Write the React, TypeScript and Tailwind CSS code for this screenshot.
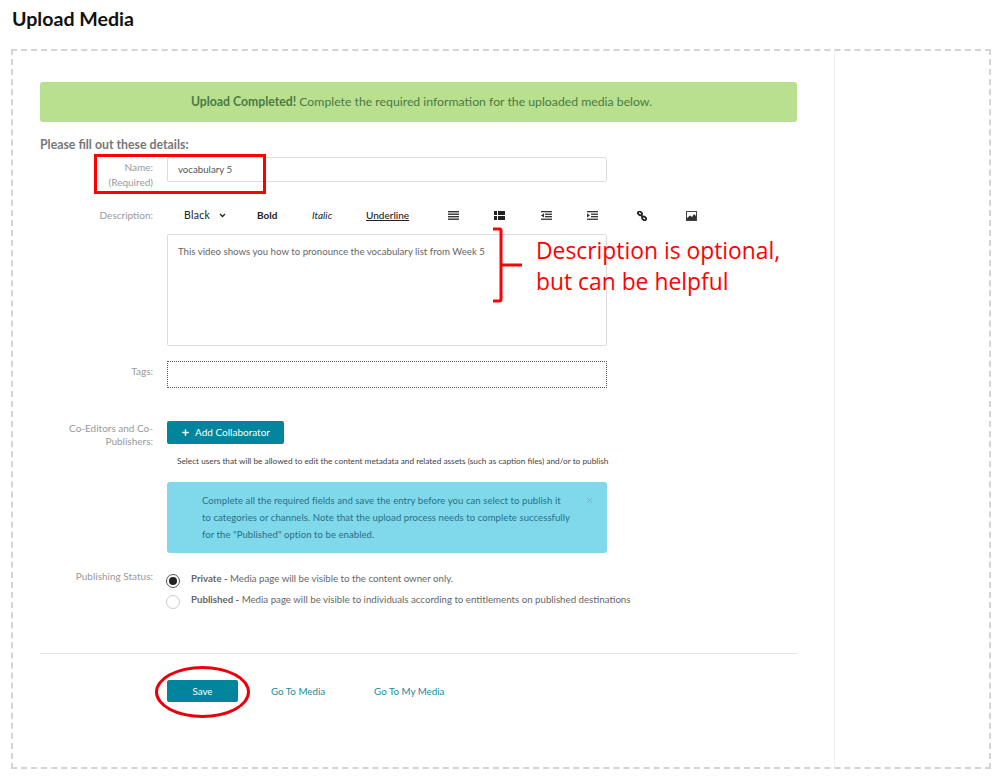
import { Plus, X } from 'lucide-react';

const TOOLBAR_TEXT = 'text-[10px] text-[#222]';

function ListIcon() {
  return (
    <svg width="11" height="9" viewBox="0 0 11 9" fill="#333">
      <rect y="0" width="11" height="1.4" />
      <rect y="2.5" width="11" height="1.4" />
      <rect y="5" width="11" height="1.4" />
      <rect y="7.5" width="11" height="1.4" />
    </svg>
  );
}

function BlockListIcon() {
  return (
    <svg width="11" height="9" viewBox="0 0 11 9" fill="#222">
      <rect x="0" y="0" width="3" height="4" />
      <rect x="4" y="0" width="7" height="4" />
      <rect x="0" y="5" width="3" height="4" />
      <rect x="4" y="5" width="7" height="4" />
    </svg>
  );
}

function IndentIcon({ flip }: { flip?: boolean }) {
  return (
    <svg width="11" height="9" viewBox="0 0 11 9" fill="#333">
      <rect y="0" width="11" height="1.3" />
      <rect x="4" y="2.6" width="7" height="1.3" />
      <rect x="4" y="5" width="7" height="1.3" />
      <rect y="7.6" width="11" height="1.3" />
      {flip ? <polygon points="0,2.2 3,4.4 0,6.6" /> : <polygon points="3,2.2 0,4.4 3,6.6" />}
    </svg>
  );
}

function LinkIcon() {
  return (
    <svg width="10" height="10" viewBox="0 0 11 11" fill="none" stroke="#222" strokeWidth="2">
      <rect x="0.9" y="0.9" width="4.6" height="3.4" rx="1.6" transform="rotate(40 3.2 2.7)" />
      <rect x="5.5" y="6.4" width="4.6" height="3.4" rx="1.6" transform="rotate(40 7.8 8.2)" />
      <path d="M4 4 L7 7" />
    </svg>
  );
}

function ImageIcon() {
  return (
    <svg width="11" height="10" viewBox="0 0 11 10">
      <rect width="11" height="10" fill="#444" />
      <rect x="1" y="1" width="9" height="8" fill="#fff" />
      <path d="M1 9 L1 7 L4 4.5 L6 6 L8 3 L10 5 L10 9 Z" fill="#333" />
    </svg>
  );
}

function Label({ children, className = '' }: { children: React.ReactNode; className?: string }) {
  return <div className={`w-[113px] shrink-0 text-right text-[10px] text-[#999] ${className}`}>{children}</div>;
}

export default function App() {
  return (
    <div className="relative h-[783px] w-[1000px] overflow-hidden bg-white font-['Lato','Liberation_Sans',sans-serif] text-[#666]">
      <h1 className="pl-3 pt-[7px] text-[19.6px] leading-[23px] font-bold text-[#111]">Upload Media</h1>

      <div className="mt-[19px] ml-[11px] flex h-[720px] w-[980px] border-2 border-dashed border-[#d4d4d4]">
        <div className="w-[822px] border-r border-[#f0f0f0] pt-[31px] pl-[27px]">
          <div className="flex h-10 w-[757px] items-center justify-center rounded-[3px] bg-[#b9e08f] pl-[6px] text-[12.25px] text-[#4a7a45]">
            <span><b>Upload Completed!</b> Complete the required information for the uploaded media below.</span>
          </div>

          <p className="mt-[15px] text-[12.3px] leading-4 font-bold text-[#777]">Please fill out these details:</p>

          <div className="mt-[4px] flex gap-[14px]">
            <Label className="pt-[3px] leading-[15px]">Name:<br />(Required)</Label>
            <div className="flex h-[25px] w-[440px] items-center rounded-[2px] border border-[#ddd] px-[10px] text-[9.7px] text-[#555]">vocabulary 5</div>
          </div>

          <div className="mt-[18px] flex gap-[14px]">
            <Label className="leading-[15px]">Description:</Label>
            <div className={`flex h-[15px] items-center pl-[17px] ${TOOLBAR_TEXT}`}>
              <span className="flex w-[73px] items-center gap-[9px] text-[10.5px] tracking-[0.3px]">
                Black
                <svg width="7" height="5" viewBox="0 0 7 5" fill="none" stroke="#222" strokeWidth="1.3"><path d="M1 1 L3.5 3.5 L6 1" /></svg>
              </span>
              <span className="w-[55px] font-bold">Bold</span>
              <span className="w-[54px] italic">Italic</span>
              <span className="w-[82px] font-medium underline">Underline</span>
              <span className="w-[46px]"><ListIcon /></span>
              <span className="w-[47px]"><BlockListIcon /></span>
              <span className="w-[46px]"><IndentIcon /></span>
              <span className="w-[50px]"><IndentIcon flip /></span>
              <span className="w-[49px]"><LinkIcon /></span>
              <span><ImageIcon /></span>
            </div>
          </div>

          <div className="mt-[11px] ml-[127px] h-[112px] w-[440px] rounded-[2px] border border-[#ddd] px-[10px] pt-[9px] text-[9.66px] leading-[15px] text-[#666]">
            This video shows you how to pronounce the vocabulary list from Week 5
          </div>

          <div className="mt-[15px] flex gap-[14px]">
            <Label className="pt-[3px] leading-[15px]">Tags:</Label>
            <div className="h-[27px] w-[440px] border border-dotted border-[#555]" />
          </div>

          <div className="mt-[33px] flex gap-[14px]">
            <Label className="pt-[1px] leading-[13px]">Co-Editors and Co-Publishers:</Label>
            <div className="w-[470px]">
              <button className="flex h-[23px] w-[117px] items-center justify-center gap-[5px] rounded-[2px] bg-[#00859c] text-[10px] text-white">
                <Plus size={9} strokeWidth={4} />
                Add Collaborator
              </button>
              <p className="mt-[11px] pl-[10px] text-[8.28px] leading-3 whitespace-nowrap text-[#444]">
                Select users that will be allowed to edit the content metadata and related assets (such as caption files) and/or to publish
              </p>
              <div className="mt-[15px] flex h-[71px] w-[440px] justify-between rounded-[3px] bg-[#7fd9ea] pt-[10px] pr-[13px] pl-[35px] text-[9.55px] leading-[17px] tracking-[0.06px] text-[#2a6f88]">
                <p className="w-[378px]">
                  Complete all the required fields and save the entry before you can select to publish it<br />
                  to categories or channels. Note that the upload process needs to complete successfully<br />
                  for the "Published" option to be enabled.
                </p>
                <X size={9} className="mt-[4px] text-[#6aa9b8]" strokeWidth={2} />
              </div>
            </div>
          </div>

          <div className="mt-[16px] flex gap-[14px]">
            <Label className="leading-[15px]">Publishing Status:</Label>
            <div className="flex flex-col gap-[6px] pt-[2px] text-[9.7px] text-[#666]">
              <div className="flex h-[15px] items-center gap-[11px]">
                <span className="-ml-px mt-[4px] flex h-[14px] w-[14px] items-center justify-center rounded-full border border-[#555]">
                  <span className="h-2 w-2 rounded-full bg-[#222]" />
                </span>
                <span><b>Private -</b> Media page will be visible to the content owner only.</span>
              </div>
              <div className="flex h-[15px] items-center gap-[11px]">
                <span className="-ml-px mt-[4px] h-[14px] w-[14px] rounded-full border border-[#ccc]" />
                <span className="whitespace-nowrap"><b>Published -</b> Media page will be visible to individuals according to entitlements on published destinations</span>
              </div>
            </div>
          </div>

          <div className="mt-[46px] w-[757px] border-t border-[#e4e4e4]" />

          <div className="mt-[26px] ml-[127px] flex items-center text-[9.75px] text-[#1a8aa0]">
            <button className="h-[22px] w-[71px] rounded-[2px] bg-[#00859c] text-white">Save</button>
            <a className="ml-[33px]">Go To Media</a>
            <a className="ml-[49px]">Go To My Media</a>
          </div>
        </div>
      </div>

      {/* red callouts added on top of the screenshot */}
      <div className="absolute top-[154px] left-[94px] h-[40px] w-[172px] border-[3px] border-[#f00]" />
      <svg className="absolute top-[226px] left-[490px]" width="36" height="80" viewBox="0 0 36 80" fill="none" stroke="#f00" strokeWidth="3">
        <path d="M3 3 H10 Q11 3 11 5 V73 Q11 75 9 75 H3" />
        <path d="M11 39 H32" />
      </svg>
      <div className="absolute top-[235px] left-[536px] font-['Open_Sans','Noto_Sans',sans-serif] text-[22.85px] leading-[31px] text-[#f00]">
        Description is optional,<br />but can be helpful
      </div>
      <div className="absolute top-[666px] left-[155px] h-[52px] w-[95px] rounded-[50%] border-[3px] border-[#e8000b]" />
    </div>
  );
}
